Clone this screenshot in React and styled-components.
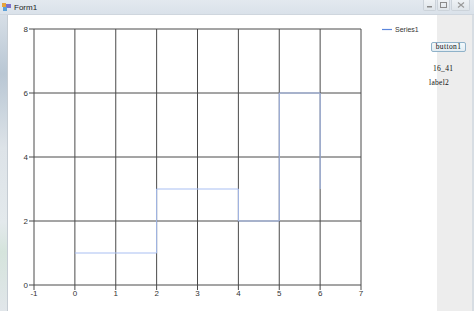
import React from "react";
import styled, { createGlobalStyle } from "styled-components";

const GlobalStyle = createGlobalStyle`
  html, body {
    margin: 0;
    padding: 0;
    background: #ffffff;
  }
  body {
    font-family: "Liberation Sans", Arial, sans-serif;
  }
`;

// chart scale
const X0 = 26;
const XU = 40.875;
const Y0 = 14;
const YU = 32;
const sx = (v) => X0 + (v + 1) * XU;
const sy = (v) => Y0 + (8 - v) * YU;

const steps = [
  [0, 1],
  [2, 1],
  [2, 3],
  [4, 3],
  [4, 2],
  [5, 2],
  [5, 6],
  [6, 6],
  [6, 3],
];

function Chart() {
  const xs = [-1, 0, 1, 2, 3, 4, 5, 6, 7];
  const ys = [0, 2, 4, 6, 8];
  return (
    <svg width="420" height="296" viewBox="0 0 420 296">
      {xs.map((v) => (
        <line key={"gx" + v} x1={sx(v)} x2={sx(v)} y1={sy(8)} y2={sy(0) + 5} stroke="#4a4a4a" strokeWidth="1" />
      ))}
      {ys.map((v) => (
        <line key={"gy" + v} x1={sx(-1) - 5} x2={sx(7)} y1={sy(v)} y2={sy(v)} stroke="#4a4a4a" strokeWidth="1" />
      ))}
      <polyline
        points={steps.map(([a, b]) => `${sx(a)},${sy(b)}`).join(" ")}
        fill="none"
        stroke="#a9bff2"
        strokeWidth="1"
      />
      {ys.map((v) => (
        <text key={"ly" + v} x={sx(-1) - 6} y={sy(v) + 3} fontSize="8" textAnchor="end" fill="#333">
          {v}
        </text>
      ))}
      {xs.map((v) => (
        <text key={"lx" + v} x={sx(v)} y={sy(0) + 11} fontSize="8" textAnchor="middle" fill="#333">
          {v}
        </text>
      ))}
      <line x1="374" x2="384" y1="14.5" y2="14.5" stroke="#5b86dc" strokeWidth="1.2" />
      <text x="387" y="17" fontSize="7" fill="#333">Series1</text>
    </svg>
  );
}

function App() {
  return (
    <>
      <GlobalStyle />
      <Window>
        <TitleBar>
          <AppIcon>
            <svg width="9" height="8" viewBox="0 0 9 8">
              <rect x="0" y="0" width="4" height="4" fill="#e6a33a" />
              <rect x="4" y="1" width="5" height="4" fill="#7c6fc9" />
              <rect x="1" y="4" width="4" height="4" fill="#5aa0d8" />
            </svg>
          </AppIcon>
          <Title>Form1</Title>
          <Controls>
            <CtrlButton>
              <svg width="7" height="6" viewBox="0 0 7 6">
                <rect x="1" y="4" width="5" height="1.5" fill="#8a8a8a" />
              </svg>
            </CtrlButton>
            <CtrlButton>
              <svg width="7" height="6" viewBox="0 0 7 6">
                <rect x="0.5" y="0.5" width="6" height="5" fill="none" stroke="#8a8a8a" />
              </svg>
            </CtrlButton>
            <CtrlButton $wide>
              <svg width="8" height="6" viewBox="0 0 8 6">
                <path d="M1 0.5 L7 5.5 M7 0.5 L1 5.5" stroke="#9a9a9a" strokeWidth="1.2" />
              </svg>
            </CtrlButton>
          </Controls>
        </TitleBar>
        <Body>
          <LeftFrame />
          <ChartArea>
            <Chart />
          </ChartArea>
          <SidePanel>
            <Button>button1</Button>
            <Label>16_41</Label>
            <Label $left>label2</Label>
          </SidePanel>
          <RightFrame />
        </Body>
      </Window>
    </>
  );
}

const Window = styled.div`
  width: 474px;
  height: 311px;
  display: flex;
  flex-direction: column;
  overflow: hidden;
`;

const TitleBar = styled.div`
  height: 15px;
  display: flex;
  align-items: center;
  background: linear-gradient(to bottom, #e3e9ef, #dae2ea);
  border-bottom: 1px solid #cfd6de;
  padding-left: 2px;
`;

const AppIcon = styled.div`
  width: 10px;
  height: 9px;
  display: flex;
  align-items: center;
`;

const Title = styled.span`
  font-family: "Liberation Sans", Arial, sans-serif;
  font-size: 8px;
  color: #1e1e1e;
  margin-left: 2px;
`;

const Controls = styled.div`
  margin-left: auto;
  display: flex;
  align-items: flex-start;
  align-self: flex-start;
  gap: 1px;
  margin-right: 4px;
`;

const CtrlButton = styled.div`
  width: ${(p) => (p.$wide ? "17px" : "11px")};
  height: 10px;
  display: flex;
  align-items: center;
  justify-content: center;
  background: linear-gradient(to bottom, #eef2f5, #dfe5ea);
  border: 1px solid #ccd3da;
  border-top: none;
  border-radius: 0 0 2px 2px;
`;

const Body = styled.div`
  flex: 1;
  display: flex;
`;

const LeftFrame = styled.div`
  width: 8px;
  background: linear-gradient(to bottom, #d6dee6 0%, #b9c7d4 20%, #dde3e8 45%, #e3e9ec 70%, #d5e4dc 80%, #e1e6ea 100%);
  border-right: 1px solid #c5ccd3;
  box-sizing: border-box;
`;

const ChartArea = styled.div`
  width: 420px;
  background: #ffffff;
  display: flex;
`;

const SidePanel = styled.div`
  width: 44px;
  background: linear-gradient(to right, #ffffff 9px, #ededed 9px);
  display: flex;
  flex-direction: column;
  align-items: flex-start;
  padding-top: 27px;
  box-sizing: border-box;
  font-family: "Liberation Serif", "Times New Roman", serif;
`;

const Button = styled.div`
  margin-left: 3px;
  width: 35px;
  height: 10px;
  box-sizing: border-box;
  border: 1px solid #8fb2c9;
  border-radius: 2px;
  background: linear-gradient(to bottom, #f4f9fc, #e2ecf2);
  font-size: 7.5px;
  line-height: 8px;
  letter-spacing: 0.4px;
  text-align: center;
  color: #111111;
`;

const Label = styled.div`
  font-size: 7.5px;
  color: #111111;
  letter-spacing: 0.3px;
  margin-left: ${(p) => (p.$left ? "1px" : "5px")};
  margin-top: ${(p) => (p.$left ? "6px" : "13px")};
  line-height: 8px;
`;

const RightFrame = styled.div`
  width: 2px;
  background: #d7dde3;
`;

export default App;
